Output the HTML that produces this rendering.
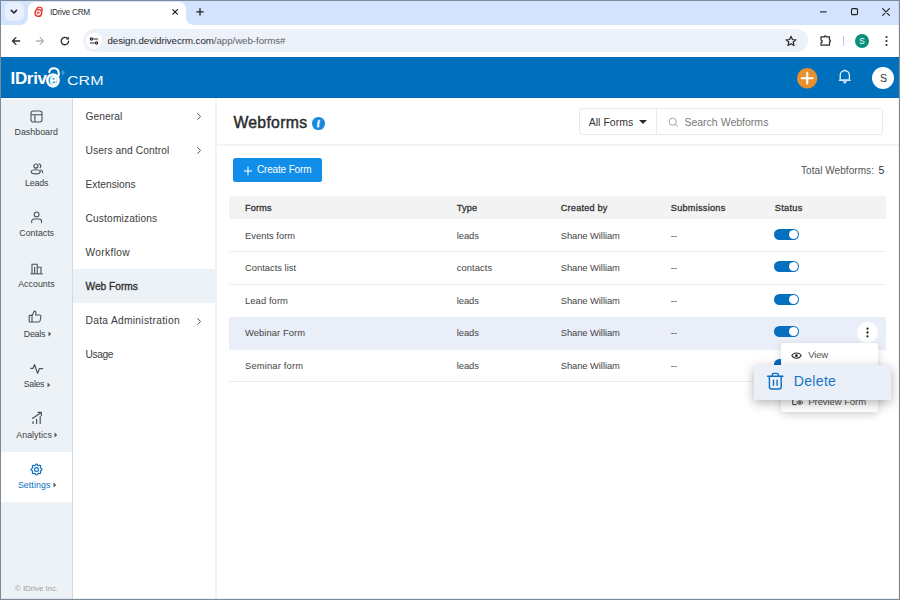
<!DOCTYPE html>
<html lang="en">
<head>
<meta charset="utf-8">
<title>IDrive CRM</title>
<style>
*{box-sizing:border-box;margin:0;padding:0}
html,body{width:900px;height:600px;overflow:hidden;background:#fff}
body{font-family:"Liberation Sans","DejaVu Sans",sans-serif;color:#333;position:relative;font-size:10px}
.abs{position:absolute}
.t{position:absolute;white-space:nowrap}
#win{position:absolute;left:0;top:0;width:900px;height:600px;overflow:hidden}
#frame{position:absolute;left:0;top:0;width:900px;height:600px;border:1px solid #7a8a97;box-shadow:inset -1px -1px 0 0 rgba(122,138,151,.12);z-index:100;pointer-events:none}
#tab{position:absolute;left:28px;top:2px;width:158px;height:23px;background:#fff;border-radius:7px 7px 0 0}
#tab:before,#tab:after{content:"";position:absolute;bottom:0;width:7px;height:7px;background:radial-gradient(circle at 0 0,transparent 6.5px,#fff 7px)}
#tab:before{left:-7px}
#tab:after{right:-7px;background:radial-gradient(circle at 100% 0,transparent 6.5px,#fff 7px)}
.tog{position:absolute;left:774.4px;width:25px;height:11.4px;border-radius:5.7px;background:#0570c0}
.tog:after{content:"";position:absolute;right:1.1px;top:1.1px;width:9.2px;height:9.2px;border-radius:50%;background:#fff}
</style>
</head>
<body>
<div id="win">
  <div class="abs" style="left:0px;top:0px;width:900px;height:25px;background:#d3e3fd;"></div>
  <div class="abs" style="left:5px;top:2px;width:18.6px;height:19px;background:#e8f0fd;border-radius:6px"></div>
  <div id="tab"></div>
  <svg class="abs" style="left:9.3px;top:7.7px" width="10" height="8" viewBox="0 0 10 8"><path d="M2.3 2.4 L4.9 5 L7.5 2.4" fill="none" stroke="#1f1f1f" stroke-width="1.5" stroke-linecap="round" stroke-linejoin="round"/></svg>
  <svg class="abs" style="left:33px;top:5px" width="12" height="14" viewBox="0 0 12 14"><g transform="rotate(8 6 7)" fill="none" stroke="#e8392f"><ellipse cx="5.5" cy="8" rx="3.3" ry="3.4" stroke-width="1.5"/><path d="M3.2 4.4 A3 3 0 0 1 8.9 3.9 V5.6" stroke-width="1.3"/><path d="M4.3 8 H6.6 A1.1 1.1 0 1 0 5.5 9.2" stroke-width="0.9"/></g></svg>
  <div class="t" style="left:49.90px;top:6px;font-size:8.3px;line-height:12px;color:#2c2f33;letter-spacing:-0.278px;">IDrive CRM</div>
  <svg class="abs" style="left:171px;top:8px" width="8" height="8" viewBox="0 0 8 8"><path d="M1.8 1.6 L6.4 6.2 M6.4 1.6 L1.8 6.2" stroke="#1f1f1f" stroke-width="1.15" stroke-linecap="round"/></svg>
  <svg class="abs" style="left:195px;top:7px" width="10" height="10" viewBox="0 0 10 10"><path d="M5 1.5 V8.1 M1.7 4.8 H8.3" stroke="#1f1f1f" stroke-width="1.25" stroke-linecap="round"/></svg>
  <svg class="abs" style="left:819px;top:8px" width="9" height="8" viewBox="0 0 9 8"><path d="M1 3.9 H7.6" stroke="#1f1f1f" stroke-width="1.1"/></svg>
  <svg class="abs" style="left:850px;top:7px" width="9" height="9" viewBox="0 0 9 9"><rect x="1.5" y="1.6" width="6" height="6" rx="1.2" fill="none" stroke="#1f1f1f" stroke-width="1.1"/></svg>
  <svg class="abs" style="left:881px;top:7px" width="10" height="10" viewBox="0 0 10 10"><path d="M1.6 1.6 L8.4 8.4 M8.4 1.6 L1.6 8.4" stroke="#1f1f1f" stroke-width="1.1" stroke-linecap="round"/></svg>
  <div class="abs" style="left:0px;top:25px;width:900px;height:32px;background:#fff;"></div>
  <div class="abs" style="left:83px;top:29px;width:724.5px;height:23px;background:#edf1f9;border-radius:11.5px"></div>
  <svg class="abs" style="left:10px;top:35px" width="12" height="12" viewBox="0 0 12 12"><path d="M9.6 6 H2.8 M5.9 2.6 L2.5 6 L5.9 9.4" fill="none" stroke="#2b2b2b" stroke-width="1.3" stroke-linecap="round" stroke-linejoin="round"/></svg>
  <svg class="abs" style="left:34px;top:35px" width="12" height="12" viewBox="0 0 12 12"><path d="M2.4 6 H9.2 M6.1 2.6 L9.5 6 L6.1 9.4" fill="none" stroke="#b4b4b4" stroke-width="1.3" stroke-linecap="round" stroke-linejoin="round"/></svg>
  <svg class="abs" style="left:59px;top:35px" width="12" height="12" viewBox="0 0 12 12"><path d="M9.6 6.2 A3.7 3.7 0 1 1 8.5 3.4" fill="none" stroke="#2b2b2b" stroke-width="1.3" stroke-linecap="round"/><path d="M9.9 1.6 V4.6 H6.9 Z" fill="#2b2b2b"/></svg>
  <div class="abs" style="left:86px;top:33px;width:16px;height:16px;background:#fff;border-radius:50%"></div>
  <svg class="abs" style="left:89px;top:36px" width="10" height="10" viewBox="0 0 10 10"><g fill="none" stroke="#2b2b2b" stroke-width="1.2" stroke-linecap="round"><path d="M4.6 3 H8.6"/><path d="M1.4 7 H5.2"/><circle cx="2.4" cy="3" r="1.1"/><circle cx="7.5" cy="7" r="1.1"/></g></svg>
  <div class="t" style="left:107.50px;top:35px;font-size:9.7px;line-height:12px;color:#25282d;letter-spacing:-0.037px;">design.devidrivecrm.com<span style="color:#5f6368">/app/web-forms#</span></div>
  <svg class="abs" style="left:785px;top:35px" width="12" height="12" viewBox="0 0 12 12"><path d="M6 1.3 L7.4 4.5 L10.9 4.8 L8.2 7.1 L9 10.5 L6 8.7 L3 10.5 L3.8 7.1 L1.1 4.8 L4.6 4.5 Z" fill="none" stroke="#2b2b2b" stroke-width="1.25" stroke-linejoin="round"/></svg>
  <svg class="abs" style="left:819px;top:34px" width="14" height="13" viewBox="0 0 14 13"><path d="M2 2.9 H5.3 a0.95 0.95 0 0 1 1.9 0 H10.5 V5.9 a0.95 0.95 0 0 1 0 1.9 V11.1 H2 V8.6 a1.25 1.25 0 0 0 0 -2.5 Z" fill="none" stroke="#2b2b2b" stroke-width="1.25" stroke-linejoin="round"/></svg>
  <div class="abs" style="left:843px;top:36px;width:1px;height:10px;background:#a8c7fa;"></div>
  <div class="abs" style="left:855px;top:34.2px;width:14px;height:14px;border-radius:50%;background:#0b8f7b;color:#fff;font-size:8.2px;line-height:15px;text-align:center">S</div>
  <svg class="abs" style="left:884px;top:35px" width="5" height="12" viewBox="0 0 5 12"><circle cx="2.5" cy="2" r="1.05" fill="#2b2b2b"/><circle cx="2.5" cy="6" r="1.05" fill="#2b2b2b"/><circle cx="2.5" cy="10" r="1.05" fill="#2b2b2b"/></svg>
  <div class="abs" style="left:0px;top:57px;width:900px;height:41px;background:#0070bd;"></div>
  <div class="abs" style="left:0px;top:57px;width:900px;height:1px;background:#0068b7;"></div>
  <div class="abs" style="left:0px;top:97px;width:900px;height:1px;background:#0064b4;"></div>
  <div class="t" style="left:10.50px;top:69px;font-size:17px;line-height:20px;color:#fff;font-weight:700;letter-spacing:-0.319px;">IDriv</div>
  <svg class="abs" style="left:44px;top:65px" width="20" height="24" viewBox="0 0 20 24"><ellipse cx="8.95" cy="15.4" rx="5.6" ry="6.0" fill="none" stroke="#fff" stroke-width="2.5"/><path d="M5.2 7.2 A4.8 4.8 0 0 1 14.7 7.6 V10.4" fill="none" stroke="#fff" stroke-width="2.1" stroke-linecap="round"/><text transform="translate(9.4 19.7) scale(0.84 1)" x="0" y="0" style="font-family:'Liberation Sans',sans-serif;font-size:16.5px;font-weight:700" fill="#fff" stroke="#fff" stroke-width="0.55" text-anchor="middle">e</text></svg>
  <div class="t" style="left:61.3px;top:70.6px;font-size:4.5px;color:#b9d6ee;line-height:5px">®</div>
  <div class="t" style="left:66.8px;top:71px;font-size:13.2px;color:#fff;line-height:20px;transform:scaleX(1.215);transform-origin:0 0;opacity:.95">CRM</div>
  <svg class="abs" style="left:797px;top:68px" width="21" height="21" viewBox="0 0 21 21"><circle cx="10.2" cy="10.2" r="10.2" fill="#e98f2e"/><path d="M10.2 4.8 V15.6 M4.8 10.2 H15.6" stroke="#fff" stroke-width="2.1" stroke-linecap="round"/></svg>
  <svg class="abs" style="left:838px;top:69.3px" width="14" height="16" viewBox="0 0 14 16"><path d="M2.2 10.4 V6.2 A4.6 4.6 0 0 1 11.4 6.2 V10.4" fill="none" stroke="#fff" stroke-width="1.2"/><circle cx="6.8" cy="1.3" r="0.7" fill="#fff"/><path d="M1.5 10.2 H12.1 L13 12 H0.6 Z" fill="#fff" fill-opacity="0.82"/><path d="M4.4 12.2 H9.4 L6.9 14.9 Z" fill="#fff" fill-opacity="0.8"/></svg>
  <div class="abs" style="left:872px;top:67px;width:22px;height:22px;background:#fff;border-radius:50%"></div>
  <div class="t" style="left:880.00px;top:72px;font-size:10.6px;line-height:12px;color:#333;">S</div>
  <div class="abs" style="left:0px;top:98px;width:73px;height:502px;background:#edf2f6;border-right:1px solid #cfdce8"></div>
  <div class="abs" style="left:1px;top:98px;width:71px;height:1px;background:#fafbfc;"></div>
  <div class="abs" style="left:1px;top:451.7px;width:71.4px;height:50.2px;background:#fff;"></div>
  <svg class="abs" style="left:29.5px;top:109.5px" width="13" height="13" viewBox="0 0 13 13"><g fill="none" stroke="#47535d" stroke-width="1.1"><rect x="1" y="1" width="11" height="11" rx="2.2"/><path d="M1 4.8 H12 M4.9 4.8 V12"/></g></svg>
  <svg class="abs" style="left:29.5px;top:162.5px" width="14" height="13" viewBox="0 0 14 13"><g fill="none" stroke="#47535d" stroke-width="1.15" stroke-linecap="round"><circle cx="5.9" cy="3.0" r="2.05"/><ellipse cx="5.7" cy="8.8" rx="4.5" ry="2.05"/><path d="M9.1 0.9 A2.2 2.2 0 0 1 10.1 4.7"/><path d="M10.7 7 Q12.9 7.7 12.7 9.7"/></g></svg>
  <svg class="abs" style="left:29.5px;top:211px" width="13" height="13" viewBox="0 0 13 13"><g fill="none" stroke="#47535d" stroke-width="1.1" stroke-linecap="round"><circle cx="6.6" cy="3.4" r="2.4"/><path d="M1.7 11.6 V10.2 A2.2 2.2 0 0 1 3.9 8 H9.3 A2.2 2.2 0 0 1 11.5 10.2 V11.6"/></g></svg>
  <svg class="abs" style="left:29.5px;top:262.5px" width="14" height="12" viewBox="0 0 14 12"><g fill="none" stroke="#47535d" stroke-width="1.1"><path d="M0.5 10.8 H12.8"/><path d="M2 10.8 V1.2 H7.2 V10.8"/><path d="M7.2 4.2 H11 V10.8"/><path d="M4.6 4 V10.8"/></g></svg>
  <svg class="abs" style="left:28px;top:310px" width="15" height="13" viewBox="0 0 15 13"><g fill="none" stroke="#47535d" stroke-width="1.1" stroke-linejoin="round"><path d="M1.9 5.4 H4 V12 H1.9 Q1.2 12 1.2 11.3 V6.1 Q1.2 5.4 1.9 5.4 Z"/><path d="M4 5.8 L6.3 1.1 Q8.2 1.2 7.9 3.2 L7.5 5 H11.6 Q13.2 5.2 12.9 6.8 L12.2 10.5 Q11.9 12 10.4 12 H4"/></g></svg>
  <svg class="abs" style="left:29.5px;top:362.5px" width="14" height="12" viewBox="0 0 14 12"><path d="M0.8 5.4 H3 L4.6 1.6 L7.6 10.4 L9.4 5.6 H12.6" fill="none" stroke="#47535d" stroke-width="1.2" stroke-linejoin="round" stroke-linecap="round"/></svg>
  <svg class="abs" style="left:31px;top:411px" width="12" height="14" viewBox="0 0 12 14"><g fill="none" stroke="#47535d" stroke-width="1.2" stroke-linecap="round" stroke-linejoin="round"><path d="M2 12.4 V10.6 M5.6 12.4 V8.4 M9.2 12.4 V5.6"/><path d="M1.4 7.4 L10.2 1.6 M7 1.4 H10.4 V4.6"/></g></svg>
  <svg class="abs" style="left:29.9px;top:462.7px" width="13" height="13" viewBox="0 0 13 13"><g fill="none" stroke="#0a6fc2" stroke-width="1.15" stroke-linejoin="round"><path d="M6.50 1.00 L6.97 1.17 L7.36 1.61 L7.67 2.13 L7.95 2.52 L8.29 2.66 L8.76 2.58 L9.35 2.43 L9.94 2.40 L10.39 2.61 L10.60 3.06 L10.57 3.65 L10.42 4.24 L10.34 4.71 L10.48 5.05 L10.87 5.33 L11.39 5.64 L11.83 6.03 L12.00 6.50 L11.83 6.97 L11.39 7.36 L10.87 7.67 L10.48 7.95 L10.34 8.29 L10.42 8.76 L10.57 9.35 L10.60 9.94 L10.39 10.39 L9.94 10.60 L9.35 10.57 L8.76 10.42 L8.29 10.34 L7.95 10.48 L7.67 10.87 L7.36 11.39 L6.97 11.83 L6.50 12.00 L6.03 11.83 L5.64 11.39 L5.33 10.87 L5.05 10.48 L4.71 10.34 L4.24 10.42 L3.65 10.57 L3.06 10.60 L2.61 10.39 L2.40 9.94 L2.43 9.35 L2.58 8.76 L2.66 8.29 L2.52 7.95 L2.13 7.67 L1.61 7.36 L1.17 6.97 L1.00 6.50 L1.17 6.03 L1.61 5.64 L2.13 5.33 L2.52 5.05 L2.66 4.71 L2.58 4.24 L2.43 3.65 L2.40 3.06 L2.61 2.61 L3.06 2.40 L3.65 2.43 L4.24 2.58 L4.71 2.66 L5.05 2.52 L5.33 2.13 L5.64 1.61 L6.03 1.17 Z"/><circle cx="6.5" cy="6.5" r="1.95"/></g></svg>
  <div class="t" style="left:14.50px;top:126px;font-size:8.8px;line-height:12px;color:#3a3f44;letter-spacing:0.050px;">Dashboard</div>
  <div class="t" style="left:25.00px;top:177px;font-size:8.8px;line-height:12px;color:#3a3f44;letter-spacing:-0.155px;">Leads</div>
  <div class="t" style="left:19.30px;top:227px;font-size:8.8px;line-height:12px;color:#3a3f44;">Contacts</div>
  <div class="t" style="left:18.20px;top:278px;font-size:8.8px;line-height:12px;color:#3a3f44;letter-spacing:0.038px;">Accounts</div>
  <div class="t" style="left:23.80px;top:328px;font-size:8.8px;line-height:12px;color:#3a3f44;letter-spacing:-0.220px;">Deals</div>
  <svg class="abs" style="left:47.5px;top:331.29999999999995px" width="4" height="6" viewBox="0 0 4 6"><path d="M0.5 0.6 L3.2 3 L0.5 5.4 Z" fill="#555"/></svg>
  <div class="t" style="left:23.80px;top:378px;font-size:8.8px;line-height:12px;color:#3a3f44;letter-spacing:-0.323px;">Sales</div>
  <svg class="abs" style="left:46.7px;top:381.7px" width="4" height="6" viewBox="0 0 4 6"><path d="M0.5 0.6 L3.2 3 L0.5 5.4 Z" fill="#555"/></svg>
  <div class="t" style="left:16.30px;top:429px;font-size:8.8px;line-height:12px;color:#3a3f44;letter-spacing:0.054px;">Analytics</div>
  <svg class="abs" style="left:54.2px;top:432.0px" width="4" height="6" viewBox="0 0 4 6"><path d="M0.5 0.6 L3.2 3 L0.5 5.4 Z" fill="#555"/></svg>
  <div class="t" style="left:17.90px;top:479px;font-size:8.8px;line-height:12px;color:#0a6fc2;letter-spacing:0.088px;">Settings</div>
  <svg class="abs" style="left:52.800000000000004px;top:482.4px" width="4" height="6" viewBox="0 0 4 6"><path d="M0.5 0.6 L3.2 3 L0.5 5.4 Z" fill="#555"/></svg>
  <div class="t" style="left:15.00px;top:583px;font-size:7.8px;line-height:12px;color:#9b9b9b;">© IDrive Inc.</div>
  <div class="abs" style="left:73px;top:98px;width:142px;height:502px;background:#fff;"></div>
  <div class="abs" style="left:215px;top:98px;width:2px;height:502px;background:#f0f3f7;"></div>
  <div class="abs" style="left:73px;top:268.8px;width:142.5px;height:34px;background:#edf2f6;"></div>
  <div class="t" style="left:85.50px;top:111px;font-size:10.2px;line-height:12px;color:#3b3b3b;letter-spacing:0.102px;">General</div>
  <svg class="abs" style="left:196px;top:112.19999999999999px" width="6" height="9" viewBox="0 0 6 9"><path d="M1.4 1.3 L4.6 4.5 L1.4 7.7" fill="none" stroke="#555" stroke-width="1"/></svg>
  <div class="t" style="left:85.50px;top:145px;font-size:10.2px;line-height:12px;color:#3b3b3b;letter-spacing:0.106px;">Users and Control</div>
  <svg class="abs" style="left:196px;top:146.24999999999997px" width="6" height="9" viewBox="0 0 6 9"><path d="M1.4 1.3 L4.6 4.5 L1.4 7.7" fill="none" stroke="#555" stroke-width="1"/></svg>
  <div class="t" style="left:85.50px;top:179px;font-size:10.2px;line-height:12px;color:#3b3b3b;letter-spacing:0.030px;">Extensions</div>
  <div class="t" style="left:85.50px;top:213px;font-size:10.2px;line-height:12px;color:#3b3b3b;letter-spacing:0.155px;">Customizations</div>
  <div class="t" style="left:85.50px;top:247px;font-size:10.2px;line-height:12px;color:#3b3b3b;letter-spacing:0.356px;">Workflow</div>
  <div class="t" style="left:85.50px;top:281px;font-size:10.2px;line-height:12px;color:#2f2f2f;-webkit-text-stroke:0.32px #2f2f2f;">Web Forms</div>
  <div class="t" style="left:85.50px;top:315px;font-size:10.2px;line-height:12px;color:#3b3b3b;letter-spacing:0.319px;">Data Administration</div>
  <svg class="abs" style="left:196px;top:316.5px" width="6" height="9" viewBox="0 0 6 9"><path d="M1.4 1.3 L4.6 4.5 L1.4 7.7" fill="none" stroke="#555" stroke-width="1"/></svg>
  <div class="t" style="left:85.50px;top:349px;font-size:10.2px;line-height:12px;color:#3b3b3b;letter-spacing:-0.397px;">Usage</div>
  <div class="t" style="left:233.40px;top:113px;font-size:15.8px;line-height:20px;color:#2b2b2b;-webkit-text-stroke:0.45px #2b2b2b;letter-spacing:0.287px;">Webforms</div>
  <div class="abs" style="left:312px;top:117px;width:12.7px;height:12.7px;border-radius:50%;background:#1a8adf;color:#fff;font:italic bold 10.5px/13.4px 'Liberation Serif',serif;text-align:center;-webkit-text-stroke:0.35px #fff;text-indent:-0.4px">i</div>
  <div class="abs" style="left:216px;top:144px;width:683px;height:2px;background:#f1f4f8;"></div>
  <div class="abs" style="left:578.5px;top:108.3px;width:304.5px;height:26.4px;background:#fff;border:1px solid #e9e9e9;border-radius:3px"></div>
  <div class="abs" style="left:656px;top:108.3px;width:1px;height:26.4px;background:#e9e9e9;"></div>
  <div class="t" style="left:588.70px;top:116px;font-size:10.5px;line-height:12px;color:#333;letter-spacing:0.030px;">All Forms</div>
  <div class="abs" style="left:638.9px;top:120px;width:0;height:0;border-left:4.1px solid transparent;border-right:4.1px solid transparent;border-top:4.5px solid #2b2b2b"></div>
  <svg class="abs" style="left:668px;top:116.7px" width="11" height="11" viewBox="0 0 11 11"><circle cx="4.7" cy="4.7" r="3.6" fill="none" stroke="#9a9a9a" stroke-width="0.9"/><path d="M7.4 7.4 L9.6 9.6" stroke="#9a9a9a" stroke-width="0.9" stroke-linecap="round"/></svg>
  <div class="t" style="left:684.40px;top:116px;font-size:10.5px;line-height:12px;color:#777;letter-spacing:0.011px;">Search Webforms</div>
  <div class="abs" style="left:233.2px;top:158px;width:88.6px;height:24px;background:#118dea;border-radius:2.5px"></div>
  <svg class="abs" style="left:243px;top:166px" width="10" height="10" viewBox="0 0 10 10"><path d="M5 0.8 V9.2 M0.8 5 H9.2" stroke="#fff" stroke-width="1.1"/></svg>
  <div class="t" style="left:257.00px;top:164px;font-size:10px;line-height:12px;color:#fff;letter-spacing:-0.166px;">Create Form</div>
  <div class="t" style="left:801.00px;top:165px;font-size:10px;line-height:12px;color:#555;letter-spacing:0.063px;">Total Webforms:</div>
  <div class="t" style="left:878.40px;top:164px;font-size:10.6px;line-height:12px;color:#333;">5</div>
  <div class="abs" style="left:229px;top:196px;width:657px;height:23.3px;background:#f3f3f3;"></div>
  <div class="t" style="left:245.10px;top:202px;font-size:9.2px;line-height:12px;color:#333;-webkit-text-stroke:0.3px #333;letter-spacing:0.147px;">Forms</div>
  <div class="t" style="left:456.80px;top:202px;font-size:9.2px;line-height:12px;color:#333;-webkit-text-stroke:0.3px #333;letter-spacing:0.114px;">Type</div>
  <div class="t" style="left:560.80px;top:202px;font-size:9.2px;line-height:12px;color:#333;-webkit-text-stroke:0.3px #333;letter-spacing:0.180px;">Created by</div>
  <div class="t" style="left:670.80px;top:202px;font-size:9.2px;line-height:12px;color:#333;-webkit-text-stroke:0.3px #333;letter-spacing:0.240px;">Submissions</div>
  <div class="t" style="left:774.80px;top:202px;font-size:9.2px;line-height:12px;color:#333;-webkit-text-stroke:0.3px #333;letter-spacing:0.286px;">Status</div>
  <div class="abs" style="left:229px;top:251.3px;width:657px;height:1px;background:#ececec;"></div>
  <div class="t" style="left:245.00px;top:230px;font-size:9.4px;line-height:12px;color:#444;letter-spacing:0.014px;">Events form</div>
  <div class="t" style="left:456.70px;top:230px;font-size:9.4px;line-height:12px;color:#444;letter-spacing:-0.034px;">leads</div>
  <div class="t" style="left:560.70px;top:230px;font-size:9.4px;line-height:12px;color:#444;letter-spacing:-0.060px;">Shane William</div>
  <div class="t" style="left:670.70px;top:230px;font-size:9.4px;line-height:12px;color:#444;">--</div>
  <div class="tog" style="top:228.6px"></div>
  <div class="abs" style="left:229px;top:283.8px;width:657px;height:1px;background:#ececec;"></div>
  <div class="t" style="left:245.00px;top:262px;font-size:9.4px;line-height:12px;color:#444;">Contacts list</div>
  <div class="t" style="left:456.70px;top:262px;font-size:9.4px;line-height:12px;color:#444;letter-spacing:0.074px;">contacts</div>
  <div class="t" style="left:560.70px;top:262px;font-size:9.4px;line-height:12px;color:#444;letter-spacing:-0.060px;">Shane William</div>
  <div class="t" style="left:670.70px;top:262px;font-size:9.4px;line-height:12px;color:#444;">--</div>
  <div class="tog" style="top:261.1px"></div>
  <div class="t" style="left:245.00px;top:295px;font-size:9.4px;line-height:12px;color:#444;letter-spacing:0.086px;">Lead form</div>
  <div class="t" style="left:456.70px;top:295px;font-size:9.4px;line-height:12px;color:#444;letter-spacing:-0.034px;">leads</div>
  <div class="t" style="left:560.70px;top:295px;font-size:9.4px;line-height:12px;color:#444;letter-spacing:-0.060px;">Shane William</div>
  <div class="t" style="left:670.70px;top:295px;font-size:9.4px;line-height:12px;color:#444;">--</div>
  <div class="tog" style="top:293.6px"></div>
  <div class="abs" style="left:229px;top:317px;width:657px;height:33px;background:#e9eef8;"></div>
  <div class="t" style="left:245.00px;top:327px;font-size:9.4px;line-height:12px;color:#444;letter-spacing:0.069px;">Webinar Form</div>
  <div class="t" style="left:456.70px;top:327px;font-size:9.4px;line-height:12px;color:#444;letter-spacing:-0.034px;">leads</div>
  <div class="t" style="left:560.70px;top:327px;font-size:9.4px;line-height:12px;color:#444;letter-spacing:-0.060px;">Shane William</div>
  <div class="t" style="left:670.70px;top:327px;font-size:9.4px;line-height:12px;color:#444;">--</div>
  <div class="tog" style="top:326.1px"></div>
  <div class="abs" style="left:229px;top:381.3px;width:657px;height:1px;background:#ececec;"></div>
  <div class="t" style="left:245.00px;top:360px;font-size:9.4px;line-height:12px;color:#444;letter-spacing:0.157px;">Seminar form</div>
  <div class="t" style="left:456.70px;top:360px;font-size:9.4px;line-height:12px;color:#444;letter-spacing:-0.034px;">leads</div>
  <div class="t" style="left:560.70px;top:360px;font-size:9.4px;line-height:12px;color:#444;letter-spacing:-0.060px;">Shane William</div>
  <div class="t" style="left:670.70px;top:360px;font-size:9.4px;line-height:12px;color:#444;">--</div>
  <div class="tog" style="top:358.6px"></div>
  <div class="abs" style="left:856.5px;top:322px;width:21px;height:21px;background:#fff;border-radius:50%"></div>
  <svg class="abs" style="left:864.5px;top:326px" width="5" height="13" viewBox="0 0 5 13"><circle cx="2.5" cy="2.7" r="1.15" fill="#222"/><circle cx="2.5" cy="6.5" r="1.15" fill="#222"/><circle cx="2.5" cy="10.3" r="1.15" fill="#222"/></svg>
  <div class="abs" style="left:780.5px;top:343px;width:97.5px;height:69px;background:#fff;border-radius:3px;box-shadow:0 3px 9px rgba(0,0,0,.17)"></div>
  <svg class="abs" style="left:790.5px;top:351px" width="11" height="9" viewBox="0 0 11 9"><path d="M0.8 4.6 C2.6 1 8.4 1 10.2 4.6 C8.4 8.2 2.6 8.2 0.8 4.6 Z" fill="none" stroke="#2b2b2b" stroke-width="1.05"/><circle cx="5.4" cy="4.7" r="1.35" fill="#222"/></svg>
  <div class="t" style="left:808.30px;top:349px;font-size:9.5px;line-height:12px;color:#555;letter-spacing:-0.180px;">View</div>
  <svg class="abs" style="left:791.5px;top:394.6px" width="12" height="12" viewBox="0 0 12 12"><path d="M0.8 1 V9.6 H4.6 M0.8 1 H4" fill="none" stroke="#333" stroke-width="1"/><path d="M4.6 7.6 Q7.8 4.2 11 7.6 Q7.8 11 4.6 7.6 Z" fill="none" stroke="#333" stroke-width="0.9"/><circle cx="7.8" cy="7.6" r="1.1" fill="#333"/></svg>
  <div class="t" style="left:808.30px;top:396px;font-size:9.5px;line-height:12px;color:#555;letter-spacing:-0.074px;">Preview Form</div>
  <div class="abs" style="left:754px;top:365px;width:137.2px;height:34.6px;background:#ebf0f8;box-shadow:0 3px 10px rgba(0,0,0,.3)"></div>
  <svg class="abs" style="left:766px;top:371.8px" width="19" height="19" viewBox="0 0 19 19"><g fill="none" stroke="#0a6fc2" stroke-width="1.4" stroke-linecap="round" stroke-linejoin="round"><path d="M1.6 4.2 H17"/><path d="M6.3 4 V2.6 Q6.3 1.4 7.5 1.4 H11.1 Q12.3 1.4 12.3 2.6 V4"/><path d="M3.4 4.4 V14.8 Q3.4 17 5.6 17 H13 Q15.2 17 15.2 14.8 V4.4"/><path d="M7.5 8.2 V13.2 M11.1 8.2 V13.2"/></g></svg>
  <div class="t" style="left:793.70px;top:371px;font-size:14.1px;line-height:20px;color:#1673c4;letter-spacing:0.307px;">Delete</div>
  <div id="frame"></div>
</div>
</body>
</html>
